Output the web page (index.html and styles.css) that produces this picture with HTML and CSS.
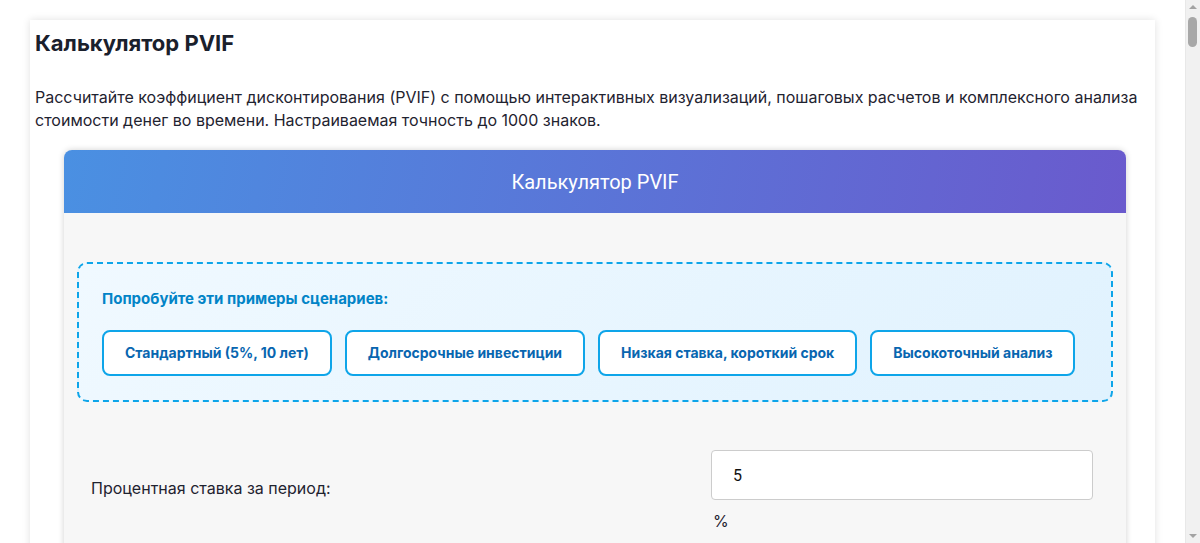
FILE: index.html
```html
<!DOCTYPE html>
<html lang="ru">
<head>
<meta charset="utf-8">
<title>Калькулятор PVIF</title>
<link rel="stylesheet" href="styles.css">
</head>
<body>
<main class="page">
  <h1 class="page-title">Калькулятор PVIF</h1>
  <p class="intro">Рассчитайте коэффициент дисконтирования (PVIF) с помощью интерактивных визуализаций, пошаговых расчетов и комплексного анализа стоимости денег во времени. Настраиваемая точность до 1000 знаков.</p>
  <section class="calc">
    <header class="calc-head">Калькулятор PVIF</header>
    <div class="calc-body">
      <div class="scenarios">
        <div class="scenarios-title">Попробуйте эти примеры сценариев:</div>
        <div class="scenario-list">
          <button class="scenario-btn">Стандартный (5%, 10 лет)</button>
          <button class="scenario-btn">Долгосрочные инвестиции</button>
          <button class="scenario-btn">Низкая ставка, короткий срок</button>
          <button class="scenario-btn">Высокоточный анализ</button>
        </div>
      </div>
      <div class="form-row">
        <label class="form-label" for="rate">Процентная ставка за период:</label>
        <div class="form-field">
          <input id="rate" class="form-input" type="text" value="5">
          <div class="unit">%</div>
        </div>
      </div>
      <div class="form-row">
        <label class="form-label" for="periods">Количество периодов:</label>
        <div class="form-field">
          <input id="periods" class="form-input" type="text" value="10">
          <div class="unit">периодов</div>
        </div>
      </div>
      <div class="form-row">
        <label class="form-label" for="prec">Точность (знаков):</label>
        <div class="form-field">
          <input id="prec" class="form-input" type="text" value="20">
          <div class="unit">знаков</div>
        </div>
      </div>
    </div>
  </section>
</main>
<div class="scrollbar" aria-hidden="true">
  <div class="sb-arrow sb-up"></div>
  <div class="sb-thumb"></div>
  <div class="sb-arrow sb-down"></div>
</div>
</body>
</html>
```
FILE: styles.css
```css
html, body {
  margin: 0;
  padding: 0;
  background: #ffffff;
}
body {
  padding: 20px 45px 40px 30px;
  font-family: Inter, "Noto Sans", sans-serif;
  color: #1f2330;
}
.page {
  background: #ffffff;
  box-shadow: 0 0 8px rgba(0, 0, 0, 0.12);
  padding: 8px 5px 30px;
}
.page-title {
  margin: 0;
  font-size: 22px;
  font-weight: 700;
  line-height: 30px;
  color: #1a202c;
}
.intro {
  margin: 28px 0 18px;
  font-size: 16px;
  line-height: 23px;
  color: #1f2330;
}
.calc {
  margin: 0 24px 0 29px;
  border-radius: 8px;
  background: #f7f7f7;
  box-shadow: 0 0 6px rgba(0, 0, 0, 0.18);
  overflow: hidden;
}
.calc-head {
  height: 63px;
  display: flex;
  align-items: center;
  justify-content: center;
  background: linear-gradient(100deg, #4a90e2 0%, #6a5acd 100%);
  color: #ffffff;
  font-family: Roboto, "Noto Sans", sans-serif;
  font-size: 20px;
}
.calc-body {
  padding: 49px 13px 20px;
}
.scenarios {
  border: 2px dashed #0ea5e9;
  border-radius: 10px;
  background: linear-gradient(135deg, #f0f9ff 0%, #e0f2fe 100%);
  padding: 25px 23px 24px;
}
.scenarios-title {
  font-size: 15px;
  font-weight: 700;
  color: #0284c7;
  line-height: 20px;
  margin-bottom: 21px;
}
.scenario-list {
  display: flex;
  flex-wrap: wrap;
  gap: 13px;
}
.scenario-btn {
  font-family: Inter, "Noto Sans", sans-serif;
  font-size: 14px;
  font-weight: 700;
  line-height: 18px;
  color: #0866b0;
  background: #ffffff;
  border: 2px solid #0ea5e9;
  border-radius: 8px;
  padding: 12px 21px;
  height: 46px;
}
.form-row {
  display: grid;
  grid-template-columns: 1fr 382px;
  column-gap: 20px;
  align-items: center;
  padding: 48px 20px 0 14px;
}
.form-label {
  font-size: 16px;
  color: #1f2330;
  margin-bottom: 5px;
}
.form-field {
  display: flex;
  flex-direction: column;
}
.form-input {
  height: 50px;
  box-sizing: border-box;
  border: 1px solid #cccccc;
  border-radius: 4px;
  background: #ffffff;
  padding: 0 21px;
  font-family: Roboto, "Noto Sans", sans-serif;
  font-size: 16px;
  color: #111111;
}
.unit {
  margin-top: 11px;
  padding-left: 2px;
  font-size: 16px;
  line-height: 20px;
  color: #1f2330;
}
.scrollbar {
  position: fixed;
  top: 0;
  right: 0;
  width: 15px;
  height: 100%;
  background: #f1f1f1;
  border-left: 1px solid #e8e8e8;
  box-sizing: border-box;
}
.sb-arrow {
  position: absolute;
  left: 3px;
  width: 0;
  height: 0;
  border-left: 4px solid transparent;
  border-right: 4px solid transparent;
}
.sb-up {
  top: 5px;
  border-bottom: 4px solid #a3a3a3;
}
.sb-down {
  bottom: 5px;
  border-top: 4px solid #a3a3a3;
}
.sb-thumb {
  position: absolute;
  top: 17px;
  left: 2px;
  width: 9px;
  height: 30px;
  border-radius: 5px;
  background: #a8a8a8;
}
```
